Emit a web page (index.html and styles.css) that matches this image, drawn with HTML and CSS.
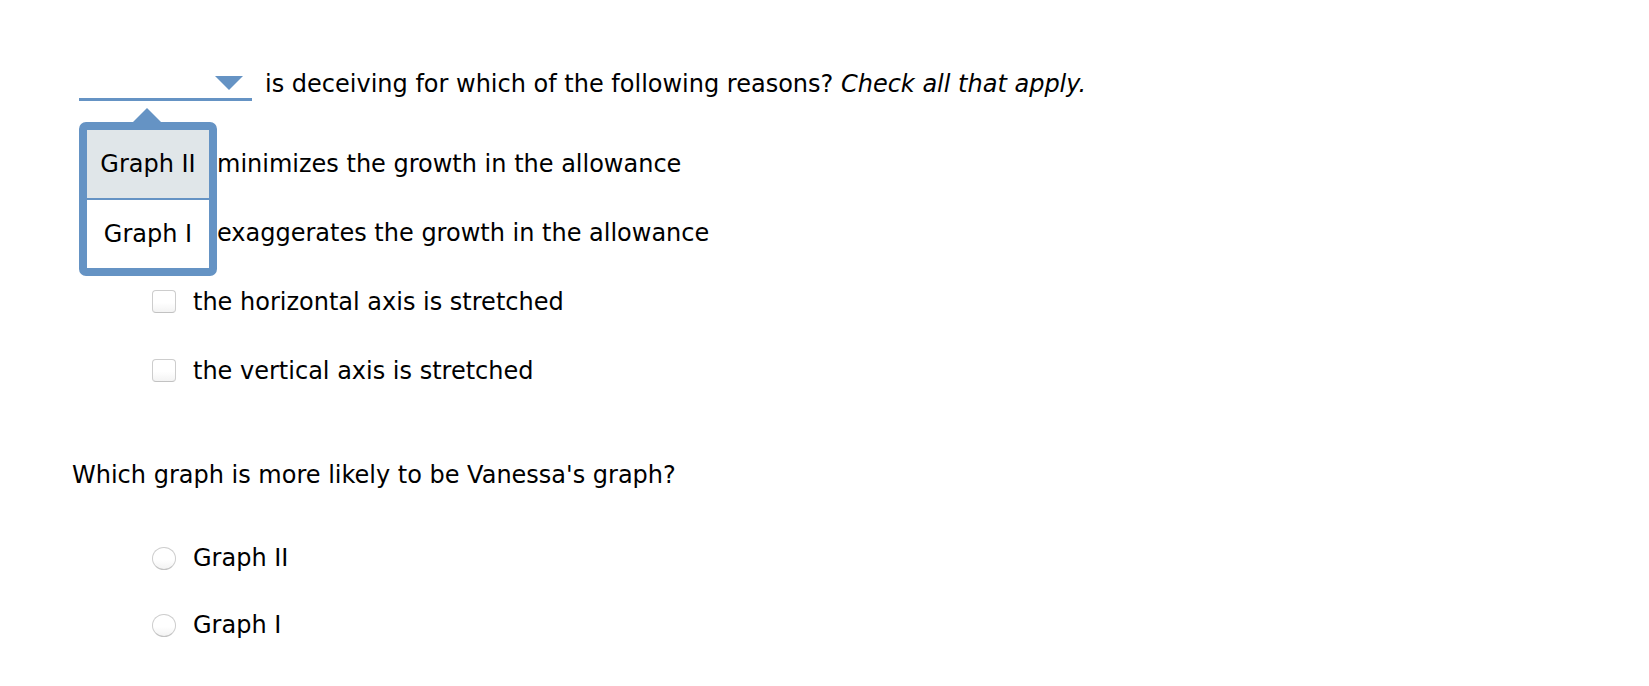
FILE: index.html
```html
<!DOCTYPE html>
<html lang="en">
<head>
<meta charset="utf-8">
<title>Question</title>
<link rel="stylesheet" href="styles.css">
</head>
<body>
<div class="page">
  <div class="prompt">
    <div class="blank">
      <span class="arrow"></span>
      <div class="popover">
        <span class="caret"></span>
        <div class="choice selected">Graph II</div>
        <div class="choice">Graph I</div>
      </div>
    </div>
    <span class="prompt-text">is deceiving for which of the following reasons? <em>Check all that apply.</em></span>
  </div>

  <ul class="options">
    <li class="row"><span class="checkbox"></span><span class="label offset">minimizes the growth in the allowance</span></li>
    <li class="row"><span class="checkbox"></span><span class="label offset">exaggerates the growth in the allowance</span></li>
    <li class="row"><span class="checkbox"></span><span class="label">the horizontal axis is stretched</span></li>
    <li class="row"><span class="checkbox"></span><span class="label">the vertical axis is stretched</span></li>
  </ul>

  <p class="question">Which graph is more likely to be Vanessa's graph?</p>

  <ul class="options radios">
    <li class="row"><span class="radio"></span><span class="label">Graph II</span></li>
    <li class="row"><span class="radio"></span><span class="label">Graph I</span></li>
  </ul>
</div>
</body>
</html>
```

FILE: styles.css
```css
html, body {
  margin: 0;
  padding: 0;
  background: #ffffff;
}

body {
  font-family: Verdana, "DejaVu Sans", sans-serif;
  font-size: 24px;
  line-height: 28px;
  color: #000000;
}

.page {
  padding: 70px 0 0 72px;
}

.prompt {
  display: flex;
  align-items: flex-end;
  height: 31px;
}

.blank {
  position: relative;
  width: 173px;
  height: 28px;
  margin-left: 7px;
  border-bottom: 3px solid #6593c4;
  flex: none;
}

.arrow {
  position: absolute;
  right: 9px;
  top: 6px;
  width: 0;
  height: 0;
  border-left: 14px solid transparent;
  border-right: 14px solid transparent;
  border-top: 14px solid #6593c4;
}

.prompt-text {
  margin-left: 13px;
  padding-bottom: 3px;
}

.prompt-text em {
  font-style: italic;
}

.popover {
  position: absolute;
  left: 0;
  top: 52px;
  z-index: 2;
  width: 122px;
  border: 8px solid #6593c4;
  border-radius: 7px;
  background: #ffffff;
}

.caret {
  position: absolute;
  left: 46px;
  top: -22px;
  width: 0;
  height: 0;
  border-left: 14.5px solid transparent;
  border-right: 14.5px solid transparent;
  border-bottom: 14px solid #6593c4;
}

.choice {
  height: 68px;
  display: flex;
  align-items: center;
  justify-content: center;
  background: #ffffff;
}

.choice.selected {
  background: #e0e6e9;
  border-bottom: 2px solid #6593c4;
}

.options {
  list-style: none;
  margin: 28px 0 0 0;
  padding: 0 0 0 80px;
}

.row {
  display: flex;
  align-items: center;
  height: 69px;
}

.checkbox {
  flex: none;
  box-sizing: border-box;
  width: 24px;
  height: 23px;
  border: 1px solid #cdcdcd;
  border-bottom-color: #c2c2c2;
  border-radius: 4px;
  background: linear-gradient(#ffffff 55%, #f3f3f3);
}

.radio {
  flex: none;
  box-sizing: border-box;
  width: 24px;
  height: 23px;
  border: 1px solid #cdcdcd;
  border-bottom-color: #c2c2c2;
  border-radius: 50%;
  background: linear-gradient(#ffffff 55%, #f3f3f3);
  margin-top: 2px;
}

.label {
  margin-left: 17px;
}

.label.offset {
  margin-left: 41px;
}

.question {
  margin: 56px 0 0 0;
}

.radios {
  margin-top: 35px;
}

.radios .row {
  height: 67px;
}
```
